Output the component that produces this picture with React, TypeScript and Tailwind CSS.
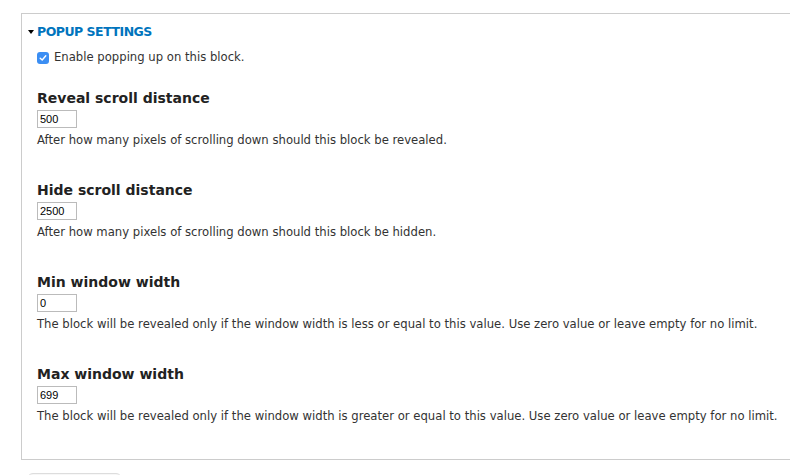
import React from 'react';

const fields = [
  {
    label: 'Reveal scroll distance',
    value: '500',
    help: 'After how many pixels of scrolling down should this block be revealed.',
  },
  {
    label: 'Hide scroll distance',
    value: '2500',
    help: 'After how many pixels of scrolling down should this block be hidden.',
  },
  {
    label: 'Min window width',
    value: '0',
    help: 'The block will be revealed only if the window width is less or equal to this value. Use zero value or leave empty for no limit.',
  },
  {
    label: 'Max window width',
    value: '699',
    help: 'The block will be revealed only if the window width is greater or equal to this value. Use zero value or leave empty for no limit.',
  },
];

const App = () => {
  return (
    <div className="h-[475px] w-[790px] overflow-hidden bg-white pl-[21px] pt-[13px] font-['DejaVu_Sans',sans-serif] text-[11.65px] text-[#333]">
      <div className="h-[447px] w-[800px] border-b border-l border-t border-[#ccc]">
        {/* legend */}
        <div className="flex h-[35px] items-center pl-[6px] pt-[1px]">
          <svg width="6" height="4" viewBox="0 0 6 4" className="mr-[3px]">
            <path d="M0 0h6L3 4z" fill="#000" />
          </svg>
          <span className="text-[12.5px] font-bold tracking-[-0.5px] text-[#0074bd]">
            POPUP SETTINGS
          </span>
        </div>

        <div className="pl-[15px]">
          <label className="flex h-[18px] items-center">
            <span className="mr-[5px] flex h-[12px] w-[12px] items-center justify-center rounded-[3px] bg-[#3b8ef3]">
              <svg width="8" height="8" viewBox="0 0 8 8">
                <path d="M1.2 4.2 3.2 6 6.8 1.8" fill="none" stroke="#fff" strokeWidth="1.4" strokeLinecap="round" strokeLinejoin="round" />
              </svg>
            </span>
            Enable popping up on this block.
          </label>

          <div className="mt-[22px] flex flex-col gap-[32px]">
            {fields.map((f) => (
              <div key={f.label} className="flex flex-col">
                <div className="h-[18px] text-[14px] font-bold leading-[18px] text-[#222]">
                  {f.label}
                </div>
                <div className="mt-[3px] flex h-[18px] w-[40px] items-center border border-[#bbb] pl-[2px] font-['Liberation_Sans',sans-serif] text-[11px] text-[#000]">
                  {f.value}
                </div>
                <div className="mt-[3px] h-[18px] leading-[18px]">{f.help}</div>
              </div>
            ))}
          </div>
        </div>
      </div>
      <div className="ml-[6px] mt-[13px] h-[20px] w-[95px] rounded-[6px] border border-[#ddd] bg-[#f7f7f7]" />
    </div>
  );
};

export default App;
